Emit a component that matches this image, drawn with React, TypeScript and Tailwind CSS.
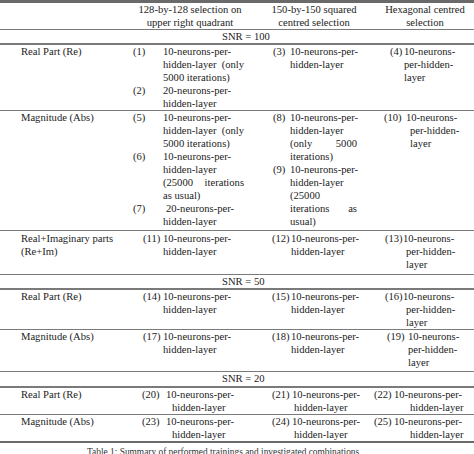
import type { ReactNode } from "react";

// 扫描版表格：训练组合汇总

type Line = string | { t?: string; j?: [string, string]; cls?: string };

interface Entry {
  n: string;
  nCls: string; // 编号的左边距与宽度
  lines: Line[];
}

interface Row {
  label: string[];
  cells: [Entry[], Entry[], Entry[]];
  cls: string;
}

const c2a = "ml-[5px] w-[30px]";
const c2b = "ml-[15px] w-[20px]";
const c2c = "ml-[14px] w-[24px]";
const c3a = "ml-[7px] w-[17px]";
const c3b = "ml-[6px] w-[19px]";
const c3c = "ml-[6px] w-[20px]";

const rows: Row[] = [
  {
    label: ["Real Part (Re)"],
    cls: "border-t-2 border-[#7a7a7a]",
    cells: [
      [
        {
          n: "(1)",
          nCls: c2a,
          lines: [
            "10-neurons-per-",
            { j: ["hidden-layer", "(only"], cls: "w-[81px]" },
            "5000 iterations)",
          ],
        },
        { n: "(2)", nCls: c2a, lines: ["20-neurons-per-", "hidden-layer"] },
      ],
      [{ n: "(3)", nCls: c3a, lines: ["10-neurons-per-", "hidden-layer"] }],
      [
        {
          n: "(4)",
          nCls: "ml-[20px] w-[14px]",
          lines: ["10-neurons-", "per-hidden-", "layer"],
        },
      ],
    ],
  },
  {
    label: ["Magnitude (Abs)"],
    cls: "border-t border-[#7a7a7a] pb-[2px]",
    cells: [
      [
        {
          n: "(5)",
          nCls: c2a,
          lines: [
            "10-neurons-per-",
            { j: ["hidden-layer", "(only"], cls: "w-[81px]" },
            "5000 iterations)",
          ],
        },
        {
          n: "(6)",
          nCls: c2a,
          lines: [
            "10-neurons-per-",
            "hidden-layer",
            { j: ["(25000", "iterations"], cls: "w-[81px]" },
            "as usual)",
          ],
        },
        {
          n: "(7)",
          nCls: c2a,
          lines: [{ t: "20-neurons-per-", cls: "pl-[3px]" }, "hidden-layer"],
        },
      ],
      [
        {
          n: "(8)",
          nCls: c3a,
          lines: [
            "10-neurons-per-",
            "hidden-layer",
            { j: ["(only", "5000"], cls: "w-[67px]" },
            "iterations)",
          ],
        },
        {
          n: "(9)",
          nCls: c3a,
          lines: [
            "10-neurons-per-",
            "hidden-layer",
            "(25000",
            { j: ["iterations", "as"], cls: "w-[67px]" },
            "usual)",
          ],
        },
      ],
      [
        {
          n: "(10)",
          nCls: "ml-[14px] w-[22px]",
          lines: [
            "10-neurons-",
            { t: "per-hidden-", cls: "pl-[4px]" },
            { t: "layer", cls: "pl-[4px]" },
          ],
        },
      ],
    ],
  },
  {
    label: ["Real+Imaginary parts", "(Re+Im)"],
    cls: "border-t border-[#7a7a7a] pt-[1px] pb-[3px]",
    cells: [
      [{ n: "(11)", nCls: c2b, lines: ["10-neurons-per-", "hidden-layer"] }],
      [{ n: "(12)", nCls: c3b, lines: ["10-neurons-per-", "hidden-layer"] }],
      [
        {
          n: "(13)",
          nCls: "ml-[15px] w-[18px]",
          lines: [
            "10-neurons-",
            { t: "per-hidden-", cls: "pl-[3px]" },
            { t: "layer", cls: "pl-[3px]" },
          ],
        },
      ],
    ],
  },
];

const rows50: Row[] = [
  {
    label: ["Real Part (Re)"],
    cls: "border-t-2 border-[#7a7a7a]",
    cells: [
      [{ n: "(14)", nCls: c2b, lines: ["10-neurons-per-", "hidden-layer"] }],
      [{ n: "(15)", nCls: c3b, lines: ["10-neurons-per-", "hidden-layer"] }],
      [
        {
          n: "(16)",
          nCls: "ml-[15px] w-[18px]",
          lines: [
            "10-neurons-",
            { t: "per-hidden-", cls: "pl-[3px]" },
            { t: "layer", cls: "pl-[3px]" },
          ],
        },
      ],
    ],
  },
  {
    label: ["Magnitude (Abs)"],
    cls: "border-t border-[#7a7a7a] pb-[2px]",
    cells: [
      [{ n: "(17)", nCls: c2b, lines: ["10-neurons-per-", "hidden-layer"] }],
      [{ n: "(18)", nCls: c3b, lines: ["10-neurons-per-", "hidden-layer"] }],
      [
        {
          n: "(19)",
          nCls: "ml-[17px] w-[21px]",
          lines: ["10-neurons-", "per-hidden-", "layer"],
        },
      ],
    ],
  },
];

const rows20: Row[] = [
  {
    label: ["Real Part (Re)"],
    cls: "border-t-2 border-[#7a7a7a]",
    cells: [
      [
        {
          n: "(20)",
          nCls: c2c,
          lines: ["10-neurons-per-", { t: "hidden-layer", cls: "pl-[6px]" }],
        },
      ],
      [
        {
          n: "(21)",
          nCls: c3c,
          lines: ["10-neurons-per-", { t: "hidden-layer", cls: "pl-[2px]" }],
        },
      ],
      [
        {
          n: "(22)",
          nCls: "ml-[4px] w-[20px]",
          lines: ["10-neurons-per-", { t: "hidden-layer", cls: "pl-[16px]" }],
        },
      ],
    ],
  },
  {
    label: ["Magnitude (Abs)"],
    cls: "border-t border-[#7a7a7a]",
    cells: [
      [
        {
          n: "(23)",
          nCls: c2c,
          lines: ["10-neurons-per-", { t: "hidden-layer", cls: "pl-[6px]" }],
        },
      ],
      [
        {
          n: "(24)",
          nCls: c3c,
          lines: ["10-neurons-per-", { t: "hidden-layer", cls: "pl-[2px]" }],
        },
      ],
      [
        {
          n: "(25)",
          nCls: "ml-[4px] w-[20px]",
          lines: ["10-neurons-per-", { t: "hidden-layer", cls: "pl-[16px]" }],
        },
      ],
    ],
  },
];

function LineView({ line }: { line: Line }) {
  if (typeof line === "string") return <div>{line}</div>;
  if (line.j)
    return (
      <div className={`flex justify-between ${line.cls ?? ""}`}>
        <span>{line.j[0]}</span>
        <span>{line.j[1]}</span>
      </div>
    );
  return <div className={line.cls}>{line.t}</div>;
}

function Cell({ entries }: { entries: Entry[] }) {
  return (
    <div>
      {entries.map((e) => (
        <div key={e.n} className="flex">
          <span className={`shrink-0 ${e.nCls}`}>{e.n}</span>
          <div className="whitespace-nowrap">
            {e.lines.map((l, i) => (
              <LineView key={i} line={l} />
            ))}
          </div>
        </div>
      ))}
    </div>
  );
}

function TableRow({ row }: { row: Row }) {
  return (
    <div className={`grid grid-cols-[128px_138px_104px_104px] ${row.cls}`}>
      <div className="pl-[21px] whitespace-nowrap">
        {row.label.map((l) => (
          <div key={l}>{l}</div>
        ))}
      </div>
      {row.cells.map((c, i) => (
        <Cell key={i} entries={c} />
      ))}
    </div>
  );
}

function SnrRow({ children, cls }: { children: ReactNode; cls?: string }) {
  return (
    <div className={`border-t border-[#7a7a7a] pl-[222px] ${cls ?? ""}`}>
      {children}
    </div>
  );
}

export default function App() {
  return (
    <div className="w-[474px] h-[454px] overflow-hidden bg-white text-[#1c1c1c] font-[family-name:'Liberation_Serif','Times_New_Roman',serif] text-[10.6px] leading-[13px]">
      <div className="h-[3px] bg-[#6a6a6a]" />
      {/* 表头 */}
      <div className="grid grid-cols-[128px_124px_124px_98px] text-center">
        <div />
        <div>
          <div>128-by-128 selection on</div>
          <div>upper right quadrant</div>
        </div>
        <div>
          <div>150-by-150 squared</div>
          <div>centred selection</div>
        </div>
        <div>
          <div>Hexagonal centred</div>
          <div>selection</div>
        </div>
      </div>

      <SnrRow>SNR = 100</SnrRow>
      {rows.map((r, i) => (
        <TableRow key={i} row={r} />
      ))}

      <SnrRow>SNR = 50</SnrRow>
      {rows50.map((r, i) => (
        <TableRow key={i} row={r} />
      ))}

      <SnrRow cls="pb-[1px]">SNR = 20</SnrRow>
      {rows20.map((r, i) => (
        <TableRow key={i} row={r} />
      ))}

      <div className="border-t-2 border-[#6a6a6a]" />
      <div className="pt-[3px] pl-[87px] text-[9.4px] text-[#333]">
        Table 1: Summary of performed trainings and investigated combinations.
      </div>
    </div>
  );
}
